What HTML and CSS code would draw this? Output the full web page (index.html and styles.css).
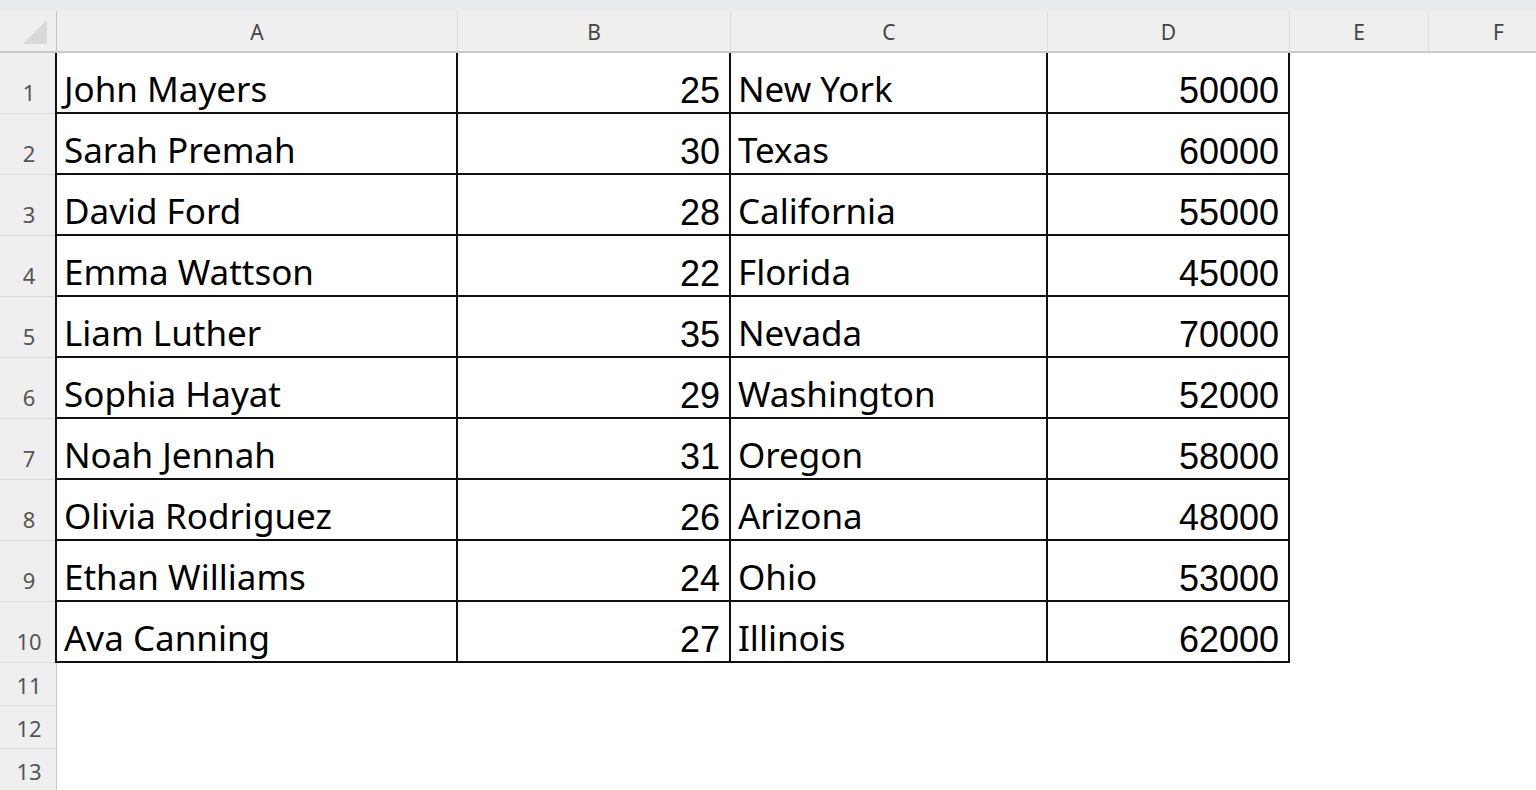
FILE: index.html
```html
<!DOCTYPE html>
<html>
<head>
<meta charset="utf-8">
<link rel="stylesheet" href="styles.css">
</head>
<body>
<div class="topstrip"></div>
<div class="sheet">
  <div class="corner"><svg width="26" height="26" viewBox="0 0 26 26"><polygon points="25,1 25,25 1,25" fill="#d9d9d9"/></svg></div>
  <div class="colhead">A</div>
  <div class="colhead">B</div>
  <div class="colhead">C</div>
  <div class="colhead">D</div>
  <div class="colhead">E</div>
  <div class="colhead">F</div>

  <div class="rowhead">1</div><div class="cell txt first">John Mayers</div><div class="cell num">25</div><div class="cell txt">New York</div><div class="cell num">50000</div><div class="empty"></div><div class="empty"></div>
  <div class="rowhead">2</div><div class="cell txt first">Sarah Premah</div><div class="cell num">30</div><div class="cell txt">Texas</div><div class="cell num">60000</div><div class="empty"></div><div class="empty"></div>
  <div class="rowhead">3</div><div class="cell txt first">David Ford</div><div class="cell num">28</div><div class="cell txt">California</div><div class="cell num">55000</div><div class="empty"></div><div class="empty"></div>
  <div class="rowhead">4</div><div class="cell txt first">Emma Wattson</div><div class="cell num">22</div><div class="cell txt">Florida</div><div class="cell num">45000</div><div class="empty"></div><div class="empty"></div>
  <div class="rowhead">5</div><div class="cell txt first">Liam Luther</div><div class="cell num">35</div><div class="cell txt">Nevada</div><div class="cell num">70000</div><div class="empty"></div><div class="empty"></div>
  <div class="rowhead">6</div><div class="cell txt first">Sophia Hayat</div><div class="cell num">29</div><div class="cell txt">Washington</div><div class="cell num">52000</div><div class="empty"></div><div class="empty"></div>
  <div class="rowhead">7</div><div class="cell txt first">Noah Jennah</div><div class="cell num">31</div><div class="cell txt">Oregon</div><div class="cell num">58000</div><div class="empty"></div><div class="empty"></div>
  <div class="rowhead">8</div><div class="cell txt first">Olivia Rodriguez</div><div class="cell num">26</div><div class="cell txt">Arizona</div><div class="cell num">48000</div><div class="empty"></div><div class="empty"></div>
  <div class="rowhead">9</div><div class="cell txt first">Ethan Williams</div><div class="cell num">24</div><div class="cell txt">Ohio</div><div class="cell num">53000</div><div class="empty"></div><div class="empty"></div>
  <div class="rowhead">10</div><div class="cell txt first">Ava Canning</div><div class="cell num">27</div><div class="cell txt">Illinois</div><div class="cell num">62000</div><div class="empty"></div><div class="empty"></div>

  <div class="rowhead small">11</div><div class="blank"></div>
  <div class="rowhead small">12</div><div class="blank"></div>
  <div class="rowhead small">13</div><div class="blank"></div>
</div>
</body>
</html>
```
FILE: styles.css
```css
* { box-sizing: border-box; }
html, body {
  margin: 0;
  padding: 0;
  background: #ffffff;
  overflow: hidden;
  width: 1536px;
  height: 790px;
}
.topstrip {
  height: 11px;
  background: #e8ecf0;
}
.sheet {
  display: grid;
  grid-template-columns: 57px 401px 273px 317px 242px 139px 140px;
  grid-template-rows: 42px repeat(10, 61px) 43px 43px 43px;
}
.corner {
  background: #efefef;
  border-right: 1px solid #c8c8c8;
  border-bottom: 2px solid #c8c8c8;
  display: flex;
  align-items: flex-end;
  justify-content: flex-end;
  padding: 0 8px 6px 0;
}
.corner svg { display: block; }
.colhead {
  background: #efefef;
  border-right: 1px solid #dcdcdc;
  border-bottom: 2px solid #c8c8c8;
  display: flex;
  align-items: center;
  justify-content: center;
  font-family: "Noto Sans", "Liberation Sans", sans-serif;
  font-size: 21px;
  color: #444444;
  padding-top: 2px;
}
.rowhead {
  background: #efefef;
  border-right: 1px solid #c8c8c8;
  border-bottom: 1px solid #dcdcdc;
  display: flex;
  align-items: flex-end;
  justify-content: center;
  font-family: "Noto Sans", "Liberation Sans", sans-serif;
  font-size: 22px;
  line-height: 1;
  color: #555555;
  padding-bottom: 10px;
  padding-left: 2px;
}
.rowhead.small { padding-bottom: 9px; }
.cell {
  border-right: 2px solid #111111;
  border-bottom: 2px solid #111111;
  display: flex;
  align-items: flex-end;
  color: #000000;
  line-height: 1;
  white-space: nowrap;
}
.cell.first { border-left: 2px solid #111111; margin-left: -2px; }
.txt {
  font-family: "Noto Sans", "Open Sans", sans-serif;
  font-size: 35px;
  padding-left: 7px;
  padding-bottom: 6px;
}
.num {
  font-family: "Liberation Sans", Arial, sans-serif;
  font-size: 36px;
  justify-content: flex-end;
  padding-right: 9px;
  padding-bottom: 3px;
}
.empty { background: #ffffff; }
.blank { grid-column: 2 / 8; background: #ffffff; }
```
